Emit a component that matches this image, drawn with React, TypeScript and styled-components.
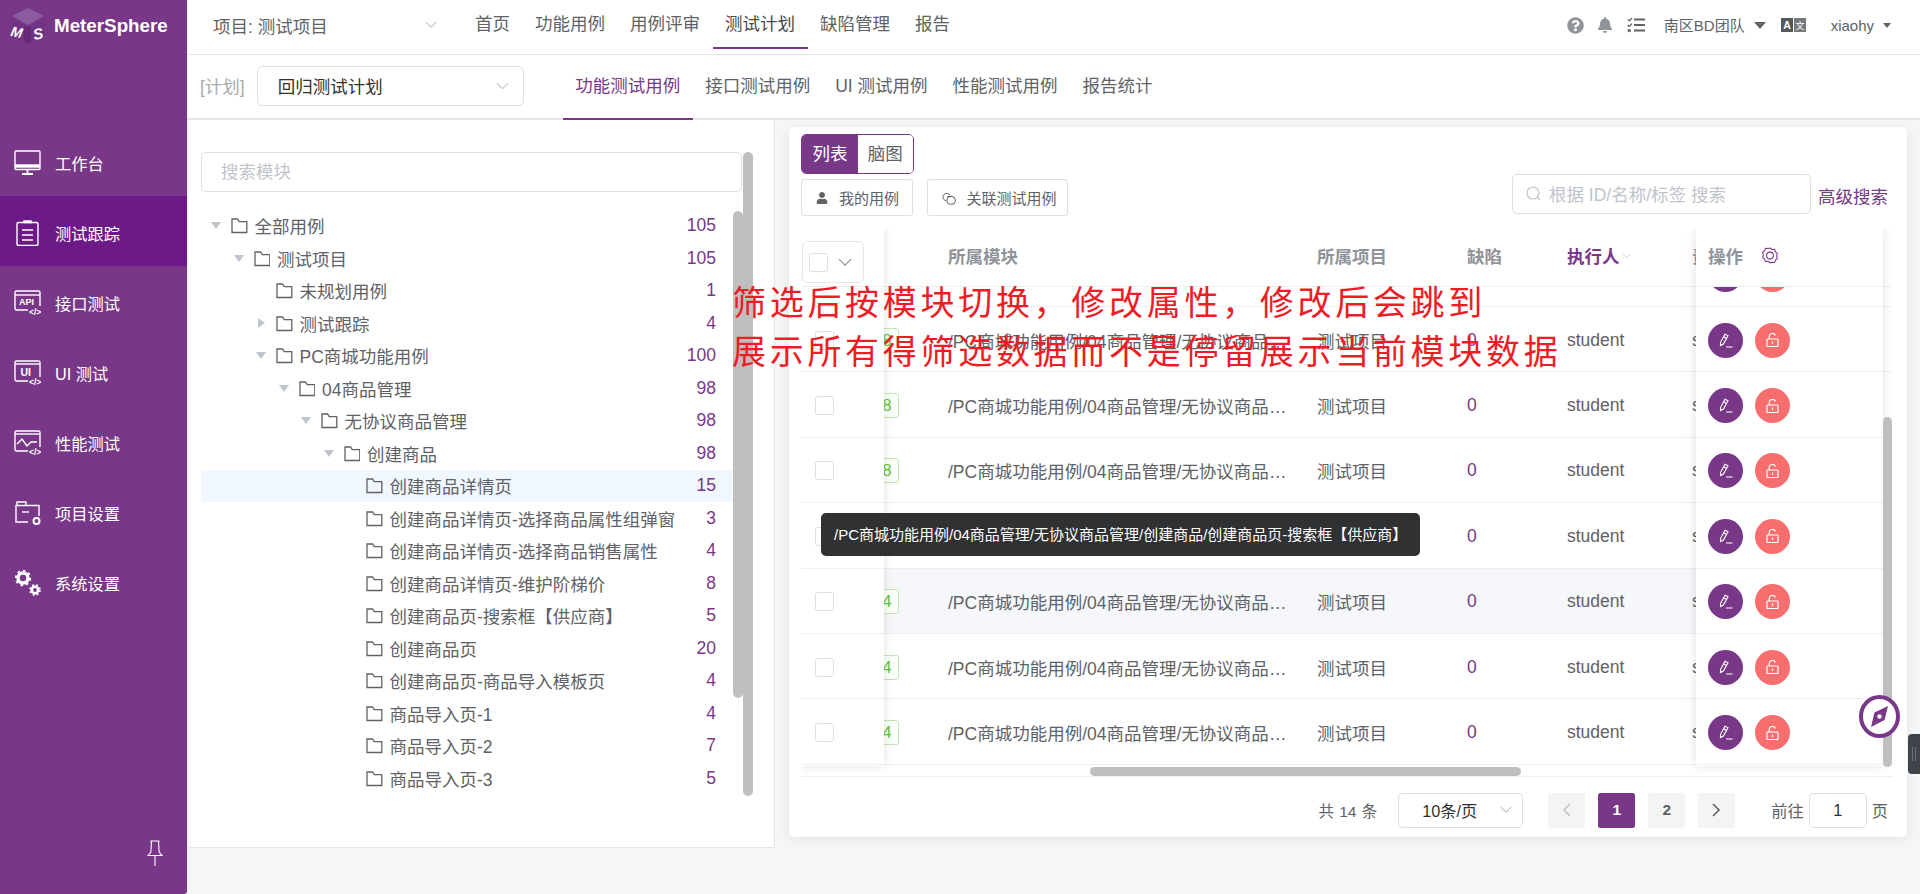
import React from "react";
import styled, { createGlobalStyle } from "styled-components";
import { FaBell, FaQuestionCircle, FaUser } from "react-icons/fa";

const PURPLE = "#783887";
const ROW_H = 65.4;
const SCROLLED = -45.4;

const Global = createGlobalStyle`
  html, body { margin: 0; padding: 0; height: 894px; overflow: hidden; background: #f5f6f7; }
  * { box-sizing: border-box; }
  body { font-family: "Liberation Sans", "Noto Sans CJK SC", sans-serif; font-size: 17.5px; color: #606266; }
`;

const Root = styled.div`position: relative; display: flex; width: 1920px; height: 894px; overflow: hidden;`;

const Sidebar = styled.aside`
  width: 187px; flex: none; height: 894px; background: ${PURPLE}; color: #fff;
  display: flex; flex-direction: column; border-bottom-right-radius: 3px;
`;
const LogoRow = styled.div`height: 126px; display: flex; align-items: flex-start; padding: 8px 0 0 10px;`;
const LogoText = styled.span`font-size: 18.8px; font-weight: 700; margin: 7px 0 0 8px; line-height: 22px; white-space: nowrap;`;
const NavItem = styled.div<{ $active?: boolean }>`
  height: 70px; display: flex; align-items: center; padding: 4px 0 0 14px; gap: 14px; font-size: 16.25px;
  background: ${(p) => (p.$active ? "#6c1a87" : "transparent")};
`;
const NavIcon = styled.svg`width: 27px; height: 26px; flex: none; fill: none; stroke: #fff; stroke-width: 1.4;`;
const PinSlot = styled.div`margin-top: auto; padding: 0 0 28px 147px; line-height: 0;`;

const Main = styled.div`flex: 1; min-width: 0; display: flex; flex-direction: column;`;
const TopBar = styled.header`height: 55px; flex: none; background: #fff; border-bottom: 1px solid #e6e6e6; display: flex; align-items: flex-start;`;
const ProjectSelect = styled.div`width: 275.5px; flex: none; height: 50px; padding: 0 26px; display: flex; align-items: center; justify-content: space-between; color: #606266;`;
const TopNav = styled.nav`display: flex; height: 49px;`;
const TopNavItem = styled.div<{ $active?: boolean }>`
  padding: 0 12.5px; height: 49px; line-height: 48px; color: ${(p) => (p.$active ? "#4a4a4d" : "#606266")};
  border-bottom: 2px solid ${(p) => (p.$active ? PURPLE : "transparent")};
`;
const TopRight = styled.div`margin-left: auto; height: 50px; padding-right: 29px; display: flex; align-items: center; font-size: 15px; color: #606266;`;
const TopSlot = styled.span<{ $ml: number }>`margin-left: ${(p) => p.$ml}px; display: inline-flex; align-items: center; line-height: 1;`;
const Caret = styled.i<{ $w: number }>`
  display: block; width: 0; height: 0; border-left: ${(p) => p.$w / 2}px solid transparent;
  border-right: ${(p) => p.$w / 2}px solid transparent; border-top: ${(p) => p.$w * 0.62}px solid #606266;
`;

const SubBar = styled.div`height: 65px; flex: none; background: #fff; border-bottom: 2px solid #e6e6e6; display: flex; padding-left: 13px; align-items: stretch;`;
const PlanLabel = styled.span`align-self: center; color: #aaa; margin-right: 12px; margin-bottom: 2px;`;
const PlanSelect = styled.div`
  align-self: center; width: 267.5px; height: 40px; margin-bottom: 2px; border: 1px solid #dcdfe6; border-radius: 5px; padding: 0 14px 0 20px;
  display: flex; align-items: center; justify-content: space-between; color: #303133;
`;
const SubTabs = styled.div`display: flex; margin-left: 38.5px;`;
const SubTab = styled.div<{ $active?: boolean }>`
  padding: 0 12.5px; height: 65px; line-height: 62px; color: ${(p) => (p.$active ? PURPLE : "#606266")};
  border-bottom: 2.5px solid ${(p) => (p.$active ? PURPLE : "transparent")};
`;

const Body = styled.div`flex: 1; min-height: 0; display: flex; align-items: flex-start;`;
const LeftPanel = styled.section`
  position: relative; width: 586px; height: 728px; margin-left: 2px; background: #fff; flex: none;
  border-right: 1px solid #e6e6e6; border-bottom: 1px solid #e6e6e6; padding: 32px 0 0 12px;
`;
const ModuleSearch = styled.div`width: 541px; height: 40px; border: 1px solid #dcdfe6; border-radius: 5px; padding-left: 19px; line-height: 38px; color: #c0c4cc;`;
const Tree = styled.div`width: 532px; margin-top: 17.5px;`;
const TreeRow = styled.div<{ $level: number; $selected?: boolean }>`
  height: 32.5px; display: flex; align-items: center; padding-left: ${(p) => p.$level * 22.5}px; padding-right: 17px;
  background: ${(p) => (p.$selected ? "#f0f7ff" : "transparent")};
`;
const CaretCell = styled.span`width: 30px; flex: none; display: flex; justify-content: center;`;
const TreeDown = styled.i`display: block; width: 0; height: 0; border-left: 5px solid transparent; border-right: 5px solid transparent; border-top: 7px solid #c0c4cc;`;
const TreeRight = styled.i`display: block; width: 0; height: 0; border-top: 5px solid transparent; border-bottom: 5px solid transparent; border-left: 7px solid #c0c4cc;`;
const TreeLabel = styled.span`margin-left: 7px; white-space: nowrap;`;
const TreeCount = styled.span`margin-left: auto; color: ${PURPLE};`;
const ScrollThumb = styled.div<{ $l: number; $t: number; $w: number; $h: number }>`
  position: absolute; left: ${(p) => p.$l}px; top: ${(p) => p.$t}px; width: ${(p) => p.$w}px; height: ${(p) => p.$h}px;
  background: #bfbfbf; border-radius: 5px; z-index: 3;
`;

const Card = styled.section`
  width: 1117.5px; height: 710px; margin: 7px 0 0 14px; background: #fff; border-radius: 5px; flex: none;
  box-shadow: 0 2px 12px rgba(0, 0, 0, 0.08); padding: 7px 0 0 12px;
`;
const Toolbar = styled.div`display: flex; justify-content: space-between; width: 1087px; height: 82px;`;
const ToolLeft = styled.div`display: flex; flex-direction: column; gap: 5px; align-items: flex-start;`;
const ViewToggle = styled.div`display: flex; width: 112.5px; height: 40px; border: 1px solid ${PURPLE}; border-radius: 5px; overflow: hidden;`;
const ViewBtn = styled.div<{ $active?: boolean }>`
  flex: ${(p) => (p.$active ? "0 0 56px" : "1")}; display: flex; align-items: center; justify-content: center; padding-bottom: 3px;
  background: ${(p) => (p.$active ? PURPLE : "#fff")}; color: ${(p) => (p.$active ? "#fff" : "#606266")};
`;
const ToolBtns = styled.div`display: flex; gap: 13.5px;`;
const ToolBtn = styled.div<{ $w: number }>`
  width: ${(p) => p.$w}px; height: 37px; border: 1px solid #dcdfe6; border-radius: 3px; font-size: 15px;
  display: flex; align-items: center; padding-left: 14px; gap: 11px; color: #606266;
`;
const ToolRight = styled.div`display: flex; align-items: flex-end; padding-bottom: 2.5px; gap: 7px;`;
const SearchBox = styled.div`
  width: 299px; height: 40px; border: 1px solid #dcdfe6; border-radius: 5px; display: flex; align-items: center;
  padding-left: 13px; gap: 8px; color: #c0c4cc; white-space: nowrap;
`;
const AdvLink = styled.a`color: ${PURPLE}; line-height: 34px;`;

const TableWrap = styled.div`position: relative; width: 1091px; height: 549px; margin-top: 12px; border-bottom: 1px solid #ebeef5; overflow: hidden;`;
const HeadRow = styled.div`display: grid; grid-template-columns: 134.5px 369px 150px 100px 125px 1fr; height: 59px; padding-bottom: 3px; border-bottom: 1px solid #ebeef5; align-items: center; font-weight: 700; color: #909399;`;
const HeadCell = styled.div<{ $active?: boolean }>`
  padding-left: 12.5px; white-space: nowrap; overflow: hidden; display: flex; align-items: center; gap: 2px;
  color: ${(p) => (p.$active ? PURPLE : "#909399")};
`;
const BodyClip = styled.div`height: 480px; overflow: hidden;`;
const Scrolled = styled.div`margin-top: ${SCROLLED}px;`;
const DataRow = styled.div<{ $hover?: boolean }>`
  display: grid; grid-template-columns: 134.5px 369px 150px 100px 125px 1fr; height: ${ROW_H}px; align-items: center; padding-top: 2px;
  border-bottom: 1px solid #ebeef5; background: ${(p) => (p.$hover ? "#f5f7fa" : "#fff")};
`;
const IdCell = styled.div`display: flex; justify-content: flex-end; padding-right: 36.5px;`;
const IdTag = styled.span`
  width: 36px; height: 25px; border: 1px solid #c2e7b0; border-radius: 3px; background: #fbfff9; color: #67c23a; font-size: 16.25px;
  display: flex; align-items: center; justify-content: flex-end; padding-right: 6.5px;
`;
const TextCell = styled.div`padding: 0 12.5px; white-space: nowrap; overflow: hidden; text-overflow: ellipsis;`;
const NumCell = styled(TextCell)`color: ${PURPLE};`;

const FixedCol = styled.div<{ $side: "left" | "right" }>`
  position: absolute; top: 0; height: 538px; background: #fff; z-index: 2; overflow: hidden;
  ${(p) => (p.$side === "left" ? "left: 0; width: 83px;" : "left: 895px; width: 187px;")}
  box-shadow: 0 0 10px rgba(0, 0, 0, 0.12);
`;
const FixedBody = styled.div`height: 479px; overflow: hidden;`;
const FixedHead = styled.div`height: 59px; padding-bottom: 3px; border-bottom: 1px solid #ebeef5; display: flex; align-items: center; font-weight: 700; color: #909399; padding-left: 12px; gap: 19px;`;
const FixedHeadLeft = styled.div`height: 59px; display: flex; align-items: flex-end; padding: 0 0 3px 1px; border-bottom: 1px solid #ebeef5;`;
const SelectAll = styled.div`width: 62px; height: 42px; border: 1px solid #e6e6e6; border-radius: 6px; display: flex; align-items: center; padding-left: 6px; gap: 10px;`;
const Check = styled.span`display: block; width: 19px; height: 19px; border: 1px solid #dcdfe6; border-radius: 2.5px; background: #fff; flex: none;`;
const FixedRow = styled.div<{ $pad: number }>`height: ${ROW_H}px; border-bottom: 1px solid #ebeef5; display: flex; align-items: center; padding: 2px 0 0 ${(p) => p.$pad}px; gap: 12px;`;
const RoundBtn = styled.span<{ $bg: string }>`width: 35px; height: 35px; border-radius: 50%; background: ${(p) => p.$bg}; display: flex; align-items: center; justify-content: center; flex: none;`;

const Pager = styled.div`display: flex; align-items: center; justify-content: flex-end; width: 1087px; height: 35px; margin-top: 15.5px; font-size: 16.25px;`;
const Total = styled.span`font-size: 15.5px; margin-right: 21px; word-spacing: 1px;`;
const SizeSelect = styled.div`
  width: 125px; height: 35px; border: 1px solid #dcdfe6; border-radius: 4px; display: flex; align-items: center; justify-content: space-between;
  padding: 0 10px 0 23px; color: #303133; margin-right: 25px;
`;
const PageBtn = styled.div<{ $active?: boolean }>`
  width: 37px; height: 35px; border-radius: 2.5px; margin-right: 13px; display: flex; align-items: center; justify-content: center; font-weight: 700; font-size: 15.5px;
  background: ${(p) => (p.$active ? PURPLE : "#f4f4f5")}; color: ${(p) => (p.$active ? "#fff" : "#606266")};
`;
const Goto = styled.span`margin-left: 23px;`;
const GotoInput = styled.div`width: 58px; height: 35px; border: 1px solid #dcdfe6; border-radius: 5px; margin: 0 5px; display: flex; align-items: center; justify-content: center; color: #303133;`;

const Tooltip = styled.div`
  position: absolute; left: 821px; top: 513px; width: 599px; height: 43px; background: #303133; color: #fff; border-radius: 5px;
  font-size: 15px; line-height: 43px; padding-left: 13px; white-space: nowrap; z-index: 5; overflow: hidden;
`;
const Annotation = styled.div`
  position: absolute; left: 732px; top: 279px; z-index: 6; color: #ee1c25; font-size: 34px; line-height: 49px; letter-spacing: 3.7px; white-space: nowrap;
`;
const CompassBtn = styled.div`position: absolute; left: 1859px; top: 695px; width: 41px; height: 43px; z-index: 6; line-height: 0;`;
const SideHandle = styled.div`
  position: absolute; left: 1908px; top: 734px; width: 12px; height: 40px; background: #3f444b; border-radius: 4px 0 0 4px; z-index: 6;
  display: flex; align-items: center; justify-content: center; gap: 2px;
`;
const HandleLine = styled.i`display: block; width: 1px; height: 14px; background: #6a6f76;`;

const IconSvg = styled.svg`display: block; flex: none;`;

const Chevron = ({ size = 14, color = "#c0c4cc" }: { size?: number; color?: string }) => (
  <IconSvg width={size} height={size * 0.6} viewBox="0 0 14 8" fill="none" stroke={color} strokeWidth="1.2"><path d="M1 1l6 6 6-6" /></IconSvg>
);

const FolderIcon = () => (
  <IconSvg width="16.5" height="17" viewBox="0 0 16.5 17" fill="none" stroke="#606266" strokeWidth="1.3"><path d="M1 2h5.6l1.6 2.6H15.8V15.5H1z" /></IconSvg>
);

const Logo = () => (
  <IconSvg width="36" height="36" viewBox="0 0 36 36">
    <path d="M18 0l16 8-16 9-16-9z" fill="#8c5a9e" />
    <path d="M1 9l16.5 9v18L1 27z" fill="#733384" />
    <path d="M35 9L18.5 18v18L35 27z" fill="#733384" />
    <path d="M14 33l3.5 3 3.5-3V18h-7z" fill="#652a75" />
    <text x="1" y="29" fill="#fff" fontSize="14" fontWeight="700" fontStyle="italic" fontFamily="Liberation Sans" transform="rotate(12 7 24)">M</text>
    <text x="23" y="31" fill="#fff" fontSize="15" fontWeight="700" fontStyle="italic" fontFamily="Liberation Sans" transform="rotate(-12 28 26)">S</text>
  </IconSvg>
);

const CodeMark = () => (
  <text x="15" y="25" fontSize="8.5" fontWeight="700" fill="#fff" stroke="none" fontFamily="Liberation Sans">{"</>"}</text>
);

const icons: React.ReactNode[] = [
  <><rect x="1" y="1" width="25" height="18.5" rx="1" /><path d="M1 16h25" strokeWidth="3.4" /><path d="M13.5 20v3M8 24h11" strokeWidth="1.8" /></>,
  <><rect x="3" y="2.5" width="21" height="23" rx="1.5" /><path d="M10 2.5V1h7v1.5z" fill="#fff" /><path d="M8 10h11M8 15h11M8 20h11" /></>,
  <><path d="M14 20H2.5A1.5 1.5 0 0 1 1 18.5V2.5A1.5 1.5 0 0 1 2.5 1h22A1.5 1.5 0 0 1 26 2.5V16" /><path d="M1 5h25" /><text x="5" y="15" fontSize="9" fontWeight="700" fill="#fff" stroke="none" fontFamily="Liberation Sans">API</text><CodeMark /></>,
  <><path d="M14 21H2.5A1.5 1.5 0 0 1 1 19.5V2.5A1.5 1.5 0 0 1 2.5 1h22A1.5 1.5 0 0 1 26 2.5V17" /><path d="M1 4h25" /><text x="6.5" y="16" fontSize="10.5" fontWeight="700" fill="#fff" stroke="none" fontFamily="Liberation Sans">UI</text><CodeMark /></>,
  <><path d="M14 21H2.5A1.5 1.5 0 0 1 1 19.5V2.5A1.5 1.5 0 0 1 2.5 1h22A1.5 1.5 0 0 1 26 2.5V17" /><path d="M1 4h25" /><path d="M3 14l5-5 5 7 4-4h6" /><CodeMark /></>,
  <><path d="M14 22H2V5.5h10V2H3v3.5M12 5.5h13V16" /><path d="M8 12h7" /><circle cx="22.5" cy="21" r="3" strokeWidth="2" /></>,
  <><circle cx="9" cy="8" r="5" strokeWidth="3.4" /><circle cx="9" cy="8" r="7.2" strokeWidth="2" strokeDasharray="2.6 3" /><circle cx="21" cy="20" r="3.2" strokeWidth="2.6" /><circle cx="21" cy="20" r="5" strokeWidth="1.6" strokeDasharray="2 2" /></>,
];
const navLabels = ["工作台", "测试跟踪", "接口测试", "UI 测试", "性能测试", "项目设置", "系统设置"];

const PinIcon = () => (
  <IconSvg width="16" height="26" viewBox="0 0 16 26" fill="none" stroke="#fff" strokeWidth="1.1">
    <path d="M3.5 1h9M4.5 1l-.6 11L1 15.5h14L12.1 12 11.5 1M8 15.5V26" />
  </IconSvg>
);

const TasksIcon = () => (
  <IconSvg width="18" height="16" viewBox="0 0 18 16" fill="none" stroke="#606266" strokeWidth="1.8">
    <path d="M7 2.5h11M7 8h11M7 13.5h11" /><path d="M.8 2.4l1.6 1.5L5 1M.8 8l1.6 1.4L5 6.6" strokeWidth="1.3" /><path d="M1 12.5h2.5v2.2H1z" fill="#606266" strokeWidth="0.6" />
  </IconSvg>
);

const TranslateIcon = () => (
  <IconSvg width="25" height="14" viewBox="0 0 25 14">
    <rect width="12" height="14" fill="#55585d" /><rect x="13" width="12" height="14" fill="#77797d" />
    <text x="6" y="11" textAnchor="middle" fill="#fff" fontSize="10.5" fontWeight="700" fontFamily="Liberation Sans">A</text>
    <text x="19" y="10.5" textAnchor="middle" fill="#fff" fontSize="9" fontFamily="Noto Sans CJK SC">文</text>
  </IconSvg>
);

const LinkIcon = () => (
  <IconSvg width="14" height="14" viewBox="0 0 14 14" fill="none" stroke="#606266" strokeWidth="1">
    <path d="M8 4.5a3.7 3.7 0 1 0-4 5.2" /><rect x="5" y="5.5" width="8.3" height="7.8" rx="3.4" /><path d="M5.5 5.5h3.5" />
  </IconSvg>
);

const SearchIcon = () => (
  <IconSvg width="15" height="15" viewBox="0 0 15 15" fill="none" stroke="#c0c4cc" strokeWidth="1.2"><circle cx="7" cy="7" r="6" /><path d="M11.3 11.3l2.6 2.6" /></IconSvg>
);

const GearIcon = () => (
  <IconSvg width="16" height="17" viewBox="0 0 16 17" fill="none" stroke={PURPLE} strokeWidth="1.1">
    <path d="M8 1l2 1.5 2.6-.1.8 2.4 2 1.6-.8 2.6.8 2.6-2 1.5-.8 2.4-2.6-.1L8 16l-2-1.6-2.6.1-.8-2.4-2-1.5.8-2.6-.8-2.6 2-1.6.8-2.4 2.6.1z" />
    <circle cx="8" cy="8.5" r="3.4" />
  </IconSvg>
);

const EditIcon = () => (
  <IconSvg width="15" height="15" viewBox="0 0 15 15" fill="none" stroke="#fff" strokeWidth="1.1">
    <path d="M7 1.2l3 1.6-4.6 8.2-2.9 1.6.1-3.3zM8 14h6.5" /><path d="M5.6 3.8l3 1.7" />
  </IconSvg>
);

const UnlockIcon = () => (
  <IconSvg width="13" height="14" viewBox="0 0 13 14" fill="none" stroke="#fff" strokeWidth="1.2">
    <rect x="1" y="6" width="11" height="7.5" rx="0.5" /><path d="M3.2 6V3.6a3.2 3.2 0 0 1 6.2-1.1M6.5 8.5v2.4" />
  </IconSvg>
);

const Compass = () => (
  <IconSvg width="41" height="43" viewBox="0 0 41 43">
    <ellipse cx="20.5" cy="21.5" rx="18.5" ry="19.5" fill="#fff" stroke={PURPLE} strokeWidth="4" />
    <path d="M29 11l-3.5 14L12 32l3.5-14.5z" fill={PURPLE} /><circle cx="20.5" cy="21.5" r="2.2" fill="#fff" />
  </IconSvg>
);

type TreeItem = { level: number; label: string; count: number; caret?: "down" | "right"; selected?: boolean };
const tree: TreeItem[] = [
  { level: 0, label: "全部用例", count: 105, caret: "down" },
  { level: 1, label: "测试项目", count: 105, caret: "down" },
  { level: 2, label: "未规划用例", count: 1 },
  { level: 2, label: "测试跟踪", count: 4, caret: "right" },
  { level: 2, label: "PC商城功能用例", count: 100, caret: "down" },
  { level: 3, label: "04商品管理", count: 98, caret: "down" },
  { level: 4, label: "无协议商品管理", count: 98, caret: "down" },
  { level: 5, label: "创建商品", count: 98, caret: "down" },
  { level: 6, label: "创建商品详情页", count: 15, selected: true },
  { level: 6, label: "创建商品详情页-选择商品属性组弹窗", count: 3 },
  { level: 6, label: "创建商品详情页-选择商品销售属性", count: 4 },
  { level: 6, label: "创建商品详情页-维护阶梯价", count: 8 },
  { level: 6, label: "创建商品页-搜索框【供应商】", count: 5 },
  { level: 6, label: "创建商品页", count: 20 },
  { level: 6, label: "创建商品页-商品导入模板页", count: 4 },
  { level: 6, label: "商品导入页-1", count: 4 },
  { level: 6, label: "商品导入页-2", count: 7 },
  { level: 6, label: "商品导入页-3", count: 5 },
];

const rows = [8, 8, 8, 8, 8, 4, 4, 4];
const PATH = "/PC商城功能用例/04商品管理/无协议商品管理/创建商品/创建商品详情页";

export default function App() {
  return (
    <Root>
      <Global />
      <Sidebar>
        <LogoRow><Logo /><LogoText>MeterSphere</LogoText></LogoRow>
        {navLabels.map((label, i) => (
          <NavItem key={label} $active={i === 1}>
            <NavIcon viewBox="0 0 27 26">{icons[i]}</NavIcon>
            {label}
          </NavItem>
        ))}
        <PinSlot><PinIcon /></PinSlot>
      </Sidebar>
      <Main>
        <TopBar>
          <ProjectSelect>项目: 测试项目<Chevron size={12} /></ProjectSelect>
          <TopNav>
            <TopNavItem>首页</TopNavItem>
            <TopNavItem>功能用例</TopNavItem>
            <TopNavItem>用例评审</TopNavItem>
            <TopNavItem $active>测试计划</TopNavItem>
            <TopNavItem>缺陷管理</TopNavItem>
            <TopNavItem>报告</TopNavItem>
          </TopNav>
          <TopRight>
            <TopSlot $ml={0}><FaQuestionCircle size={17} color="#909399" /></TopSlot>
            <TopSlot $ml={13}><FaBell size={16} color="#909399" /></TopSlot>
            <TopSlot $ml={14}><TasksIcon /></TopSlot>
            <TopSlot $ml={19}>南区BD团队</TopSlot>
            <TopSlot $ml={9}><Caret $w={12} /></TopSlot>
            <TopSlot $ml={15}><TranslateIcon /></TopSlot>
            <TopSlot $ml={25}>xiaohy</TopSlot>
            <TopSlot $ml={9}><Caret $w={9} /></TopSlot>
          </TopRight>
        </TopBar>
        <SubBar>
          <PlanLabel>[计划]</PlanLabel>
          <PlanSelect>回归测试计划<Chevron size={13} /></PlanSelect>
          <SubTabs>
            <SubTab $active>功能测试用例</SubTab>
            <SubTab>接口测试用例</SubTab>
            <SubTab>UI 测试用例</SubTab>
            <SubTab>性能测试用例</SubTab>
            <SubTab>报告统计</SubTab>
          </SubTabs>
        </SubBar>
        <Body>
          <LeftPanel>
            <ModuleSearch>搜索模块</ModuleSearch>
            <Tree>
              {tree.map((t) => (
                <TreeRow key={t.label} $level={t.level} $selected={t.selected}>
                  <CaretCell>{t.caret === "down" ? <TreeDown /> : t.caret === "right" ? <TreeRight /> : null}</CaretCell>
                  <FolderIcon />
                  <TreeLabel>{t.label}</TreeLabel>
                  <TreeCount>{t.count}</TreeCount>
                </TreeRow>
              ))}
            </Tree>
            <ScrollThumb $l={554} $t={32} $w={10} $h={644} />
            <ScrollThumb $l={544} $t={91} $w={10} $h={487} />
          </LeftPanel>
          <Card>
            <Toolbar>
              <ToolLeft>
                <ViewToggle><ViewBtn $active>列表</ViewBtn><ViewBtn>脑图</ViewBtn></ViewToggle>
                <ToolBtns>
                  <ToolBtn $w={112}><FaUser size={12} color="#606266" />我的用例</ToolBtn>
                  <ToolBtn $w={141.5}><LinkIcon />关联测试用例</ToolBtn>
                </ToolBtns>
              </ToolLeft>
              <ToolRight>
                <SearchBox><SearchIcon />根据 ID/名称/标签 搜索</SearchBox>
                <AdvLink>高级搜索</AdvLink>
              </ToolRight>
            </Toolbar>
            <TableWrap>
              <HeadRow>
                <HeadCell />
                <HeadCell>所属模块</HeadCell>
                <HeadCell>所属项目</HeadCell>
                <HeadCell>缺陷</HeadCell>
                <HeadCell $active>执行人<Chevron size={9} /></HeadCell>
                <HeadCell>责任人</HeadCell>
              </HeadRow>
              <BodyClip>
                <Scrolled>
                  {rows.map((n, i) => (
                    <DataRow key={i} $hover={i === 5}>
                      <IdCell><IdTag>{n}</IdTag></IdCell>
                      <TextCell>{PATH}</TextCell>
                      <TextCell>测试项目</TextCell>
                      <NumCell>0</NumCell>
                      <TextCell>student</TextCell>
                      <TextCell>student</TextCell>
                    </DataRow>
                  ))}
                </Scrolled>
              </BodyClip>
              <FixedCol $side="left">
                <FixedHeadLeft><SelectAll><Check /><Chevron size={14} color="#909399" /></SelectAll></FixedHeadLeft>
                <FixedBody>
                  <Scrolled>
                    {rows.map((_, i) => (
                      <FixedRow key={i} $pad={13.5}><Check /></FixedRow>
                    ))}
                  </Scrolled>
                </FixedBody>
              </FixedCol>
              <FixedCol $side="right">
                <FixedHead>操作<GearIcon /></FixedHead>
                <FixedBody>
                  <Scrolled>
                    {rows.map((_, i) => (
                      <FixedRow key={i} $pad={12}>
                        <RoundBtn $bg={PURPLE}><EditIcon /></RoundBtn>
                        <RoundBtn $bg="#f76e6e"><UnlockIcon /></RoundBtn>
                      </FixedRow>
                    ))}
                  </Scrolled>
                </FixedBody>
              </FixedCol>
              <ScrollThumb $l={1082} $t={189} $w={9} $h={350} />
              <ScrollThumb $l={289} $t={539} $w={431} $h={9} />
            </TableWrap>
            <Pager>
              <Total>共 14 条</Total>
              <SizeSelect>10条/页<Chevron size={12} /></SizeSelect>
              <PageBtn><IconSvg width="9" height="14" viewBox="0 0 9 14" fill="none" stroke="#c0c4cc" strokeWidth="1.6"><path d="M8 1L2 7l6 6" /></IconSvg></PageBtn>
              <PageBtn $active>1</PageBtn>
              <PageBtn>2</PageBtn>
              <PageBtn><IconSvg width="9" height="14" viewBox="0 0 9 14" fill="none" stroke="#606266" strokeWidth="1.6"><path d="M1 1l6 6-6 6" /></IconSvg></PageBtn>
              <Goto>前往</Goto>
              <GotoInput>1</GotoInput>
              <span>页</span>
            </Pager>
          </Card>
        </Body>
      </Main>
      <Tooltip>/PC商城功能用例/04商品管理/无协议商品管理/创建商品/创建商品页-搜索框【供应商】</Tooltip>
      <Annotation>
        筛选后按模块切换，修改属性，修改后会跳到<br />
        展示所有得筛选数据而不是停留展示当前模块数据
      </Annotation>
      <CompassBtn><Compass /></CompassBtn>
      <SideHandle><HandleLine /><HandleLine /></SideHandle>
    </Root>
  );
}
